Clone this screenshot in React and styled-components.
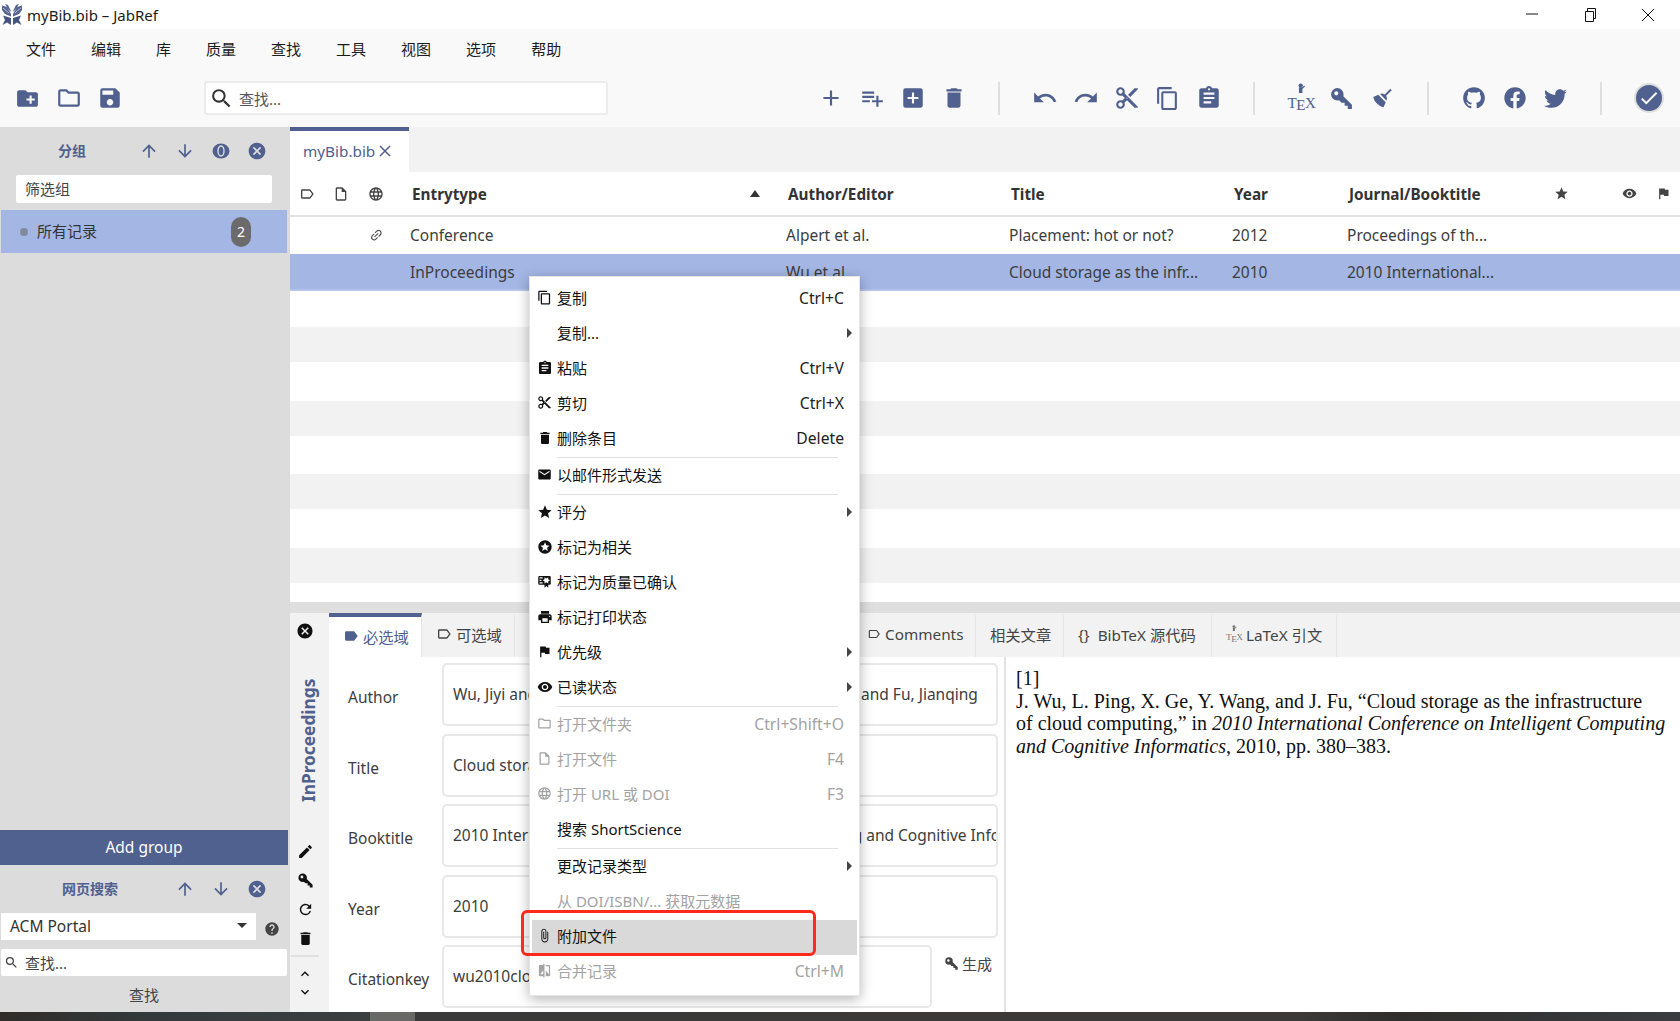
import styled, { createGlobalStyle } from "styled-components";
import {
  MdAdd, MdAddBox, MdArrowDownward, MdArrowUpward, MdAssignment, MdAttachFile, MdCancel, MdCheck,
  MdContentCopy, MdContentCut, MdCreateNewFolder, MdDelete, MdEdit, MdEmail, MdFlag, MdHelp,
  MdKeyboardArrowDown, MdKeyboardArrowUp, MdLabel, MdLanguage, MdLink, MdOutlineFolder,
  MdOutlineInsertDriveFile, MdOutlineLabel, MdPlaylistAdd, MdPrint, MdRedo, MdRefresh, MdSave,
  MdSearch, MdStar, MdStars, MdUndo, MdVisibility,
} from "react-icons/md";
import { FaFacebook, FaTwitter } from "react-icons/fa";

const BRAND = "#50608f";
const SELECTED = "#a3b6e4";
const UI_FONT = '"Noto Sans", "Noto Sans CJK SC", sans-serif';

const GITHUB = "M12,2A10,10 0 0,0 2,12C2,16.42 4.87,20.17 8.84,21.5C9.34,21.58 9.5,21.27 9.5,21C9.5,20.77 9.5,20.14 9.5,19.31C6.73,19.91 6.14,17.97 6.14,17.97C5.68,16.81 5.03,16.5 5.03,16.5C4.12,15.88 5.1,15.9 5.1,15.9C6.1,15.97 6.63,16.93 6.63,16.93C7.5,18.45 8.97,18 9.54,17.76C9.63,17.11 9.89,16.67 10.17,16.42C7.95,16.17 5.62,15.31 5.62,11.5C5.62,10.39 6,9.5 6.65,8.79C6.55,8.54 6.2,7.5 6.75,6.15C6.75,6.15 7.59,5.88 9.5,7.17C10.29,6.95 11.15,6.84 12,6.84C12.85,6.84 13.71,6.95 14.5,7.17C16.41,5.88 17.25,6.15 17.25,6.15C17.8,7.5 17.45,8.54 17.35,8.79C18,9.5 18.38,10.39 18.38,11.5C18.38,15.32 16.04,16.16 13.81,16.41C14.17,16.72 14.5,17.33 14.5,18.26C14.5,19.6 14.5,20.68 14.5,21C14.5,21.27 14.66,21.59 15.17,21.5C19.14,20.16 22,16.42 22,12A10,10 0 0,0 12,2Z";
const KEY = "M22,18V22H18V19H15V16H12L9.74,13.74C9.19,13.91 8.61,14 8,14A6,6 0 0,1 2,8A6,6 0 0,1 8,2A6,6 0 0,1 14,8C14,8.61 13.91,9.19 13.74,9.74L22,18M7,5A2,2 0 0,0 5,7A2,2 0 0,0 7,9A2,2 0 0,0 9,7A2,2 0 0,0 7,5Z";
const BROOM = "M19.36,2.72L20.78,4.14L15.06,9.85C16.13,11.39 16.28,13.24 15.38,14.44L9.06,8.12C10.26,7.22 12.11,7.37 13.65,8.44L19.36,2.72M5.93,17.57C3.92,15.56 2.69,13.16 2.35,10.92L7.23,8.83L14.67,16.27L12.58,21.15C10.34,20.81 7.94,19.58 5.93,17.57Z";
const CERTIFICATE = "M4,3C2.89,3 2,3.89 2,5V15A2,2 0 0,0 4,17H12V22L15,19L18,22V17H20A2,2 0 0,0 22,15V8L22,6V5A2,2 0 0,0 20,3H16V3H4M12,5L15,7L18,5V8.5L21,10L18,11.5V15L15,13L12,15V11.5L9,10L12,8.5V5M4,5H9V7H4V5M4,9H7V11H4V9M4,13H9V15H4V13Z";
const COMPARE = "M19,3H14V5H19V18L14,12V21H19A2,2 0 0,0 21,19V5C21,3.89 20.1,3 19,3M10,18H5L10,12M10,3H5C3.89,3 3,3.89 3,5V19A2,2 0 0,0 5,21H10V23H12V1H10V3Z";

const GlobalStyle = createGlobalStyle`
  html, body {
    margin: 0;
    padding: 0;
    background: #fff;
    overflow: hidden;
  }
  * {
    box-sizing: border-box;
  }
`;

const Page = styled.div`
  position: relative;
  width: 1680px;
  height: 1021px;
  display: flex;
  flex-direction: column;
  overflow: hidden;
  font-family: ${UI_FONT};
  font-size: 15px;
  color: #333;
`;

const TitleBar = styled.div`
  height: 29px;
  flex: none;
  display: flex;
  align-items: center;
  padding-left: 2px;
  background: #fff;
  color: #1c1c1c;
`;

const TitleText = styled.span`
  margin-left: 5px;
  font-size: 15px;
  flex: 1;
`;

const WindowButton = styled.div`
  width: 58px;
  display: flex;
  justify-content: center;
`;

const WindowButtons = styled.div`
  display: flex;
  padding-right: 3px;
`;

const MenuBar = styled.div`
  height: 40px;
  flex: none;
  display: flex;
  align-items: center;
  padding-left: 8px;
  background: #f9f9f9;
  color: #1c1c1c;
`;

const MenuItem = styled.span`
  padding: 0 18px;
  margin-right: -1px;
  line-height: 40px;
`;

const ToolBar = styled.div`
  height: 58px;
  flex: none;
  display: flex;
  align-items: center;
  padding-left: 7px;
  background: #f9f9f9;
`;

const ToolButton = styled.div`
  width: 41px;
  height: 36px;
  flex: none;
  display: flex;
  align-items: center;
  justify-content: center;
  color: ${BRAND};
`;

const ToolSeparator = styled.div`
  width: 2px;
  height: 33px;
  flex: none;
  background: #dfdfdf;
  margin: 0 ${(p) => p.$after}px 0 24px;
`;

const SearchBox = styled.div`
  width: 404px;
  height: 34px;
  margin: 0 202px 0 74px;
  flex: none;
  display: flex;
  align-items: center;
  gap: 5px;
  padding-left: 3px;
  background: #fff;
  border: 2px solid #ececec;
  border-radius: 3px;
  color: #555;
`;

const CheckBadge = styled.div`
  width: 26px;
  height: 26px;
  border-radius: 50%;
  background: ${BRAND};
  box-shadow: 0 0 0 2px #dedede;
  color: #fff;
  display: flex;
  align-items: center;
  justify-content: center;
`;

const Body = styled.div`
  flex: 1;
  min-height: 0;
  display: flex;
`;

const SidePanel = styled.div`
  width: 290px;
  flex: none;
  display: flex;
  flex-direction: column;
  background: #dcdcdc;
`;

const PanelHeader = styled.div`
  height: 48px;
  flex: none;
  display: flex;
  align-items: center;
`;

const PanelTitle = styled.div`
  width: ${(p) => p.$width}px;
  padding: 0 0 3px 13px;
  flex: none;
  text-align: center;
  font-weight: 700;
  color: ${BRAND};
  font-size: 14px;
`;

const PanelIcon = styled.div`
  width: 36px;
  flex: none;
  display: flex;
  justify-content: center;
  color: ${BRAND};
`;

const FilterInput = styled.div`
  width: 256px;
  height: 28px;
  margin-left: 16px;
  padding-left: 9px;
  flex: none;
  background: #fff;
  border-radius: 2px;
  line-height: 28px;
  color: #444;
`;

const GroupRow = styled.div`
  width: 286px;
  height: 43px;
  margin: 7px 0 0 1px;
  flex: none;
  display: flex;
  align-items: center;
  background: ${SELECTED};
`;

const GroupDot = styled.span`
  width: 8px;
  height: 8px;
  margin: 0 9px 0 19px;
  border-radius: 50%;
  background: #7f8a9f;
`;

const GroupName = styled.span`
  flex: 1;
  margin-top: -2px;
  color: #333;
`;

const CountBadge = styled.span`
  width: 20px;
  height: 30px;
  margin-right: 36px;
  border-radius: 10px;
  background: #6b6b6b;
  color: #fff;
  font-size: 14px;
  display: flex;
  align-items: center;
  justify-content: center;
`;

const PanelSpacer = styled.div`
  flex: 1;
`;

const AddGroupButton = styled.div`
  width: 288px;
  height: 35px;
  flex: none;
  background: ${BRAND};
  color: #fff;
  text-align: center;
  line-height: 34px;
  font-size: 15.5px;
`;

const ComboRow = styled.div`
  height: 27px;
  flex: none;
  display: flex;
  align-items: center;
  padding-left: 1px;
`;

const ComboBox = styled.div`
  width: 255px;
  height: 27px;
  flex: none;
  display: flex;
  align-items: center;
  justify-content: space-between;
  padding: 0 9px 2px;
  background: #fff;
  font-size: 15.5px;
`;

const ComboArrow = styled.span`
  width: 0;
  height: 0;
  border-left: 5px solid transparent;
  border-right: 5px solid transparent;
  border-top: 5px solid #333;
`;

const HelpIcon = styled.span`
  margin: 4px 0 0 8px;
  display: flex;
  color: #444;
`;

const WebSearchInput = styled.div`
  width: 286px;
  height: 27px;
  margin: 9px 0 0 1px;
  flex: none;
  display: flex;
  align-items: center;
  gap: 6px;
  padding: 0 0 1px 3px;
  background: #fff;
  border-radius: 2px;
  color: #444;
`;

const FetchButton = styled.div`
  width: 62px;
  height: 32px;
  margin: 4px 0 0 113px;
  flex: none;
  text-align: center;
  line-height: 31px;
  color: #444;
`;

const Main = styled.div`
  flex: 1;
  min-width: 0;
  display: flex;
  flex-direction: column;
`;

const FileTabs = styled.div`
  height: 45px;
  flex: none;
  background: #f2f2f2;
`;

const FileTab = styled.div`
  width: 119px;
  height: 45px;
  display: flex;
  align-items: center;
  gap: 4px;
  padding: 0 0 2px 13px;
  background: #fff;
  border-top: 4px solid ${BRAND};
  color: ${BRAND};
  font-size: 15.3px;
`;

const TableArea = styled.div`
  height: 430px;
  flex: none;
  overflow: hidden;
  font-size: 15.5px;
`;

const columns = "34px 34px 36px 392px 223px 223px 115px 194px 40px 31px 34px 34px";

const HeaderRow = styled.div`
  height: 45px;
  display: grid;
  grid-template-columns: ${columns};
  align-items: center;
  border-bottom: 2px solid #e3e3e3;
  font-weight: 700;
  font-size: 15.3px;
  color: #333;
`;

const HeaderIcon = styled.div`
  display: flex;
  justify-content: center;
  color: #444;
`;

const HeaderText = styled.div`
  padding: ${(p) => (p.$first ? "0 26px 0 18px" : "0 0 0 2px")};
  display: flex;
  align-items: center;
  justify-content: space-between;
`;

const SortArrow = styled.span`
  width: 0;
  height: 0;
  border-left: 5px solid transparent;
  border-right: 5px solid transparent;
  border-bottom: 7px solid #333;
`;

const Row = styled.div`
  height: 36.75px;
  padding-top: 2px;
  display: grid;
  grid-template-columns: ${columns};
  align-items: center;
  background: ${(p) => p.$background};
  border-bottom: 2px solid ${(p) => (p.$selected ? "#b5c5ea" : "#fff")};
  color: #3d3d3d;
`;

const Cell = styled.div`
  white-space: nowrap;
  overflow: hidden;
  padding-left: ${(p) => (p.$first ? "16px" : "0")};
`;

const LinkCell = styled.div`
  display: flex;
  justify-content: center;
  color: #555;
  transform: rotate(-45deg);
`;

const ScrollTrack = styled.div`
  height: 11px;
  flex: none;
  background: #dfdfdf;
`;

const BottomPane = styled.div`
  flex: 1;
  min-height: 0;
  display: flex;
`;

const EditorStrip = styled.div`
  width: 39px;
  flex: none;
  display: flex;
  flex-direction: column;
  align-items: center;
  padding: 9px 9px 0 0;
  background: #f2f2f2;
  color: #111;
`;

const EntryTypeLabel = styled.div`
  height: 122px;
  margin: 40px 0 41px 8px;
  writing-mode: vertical-rl;
  transform: rotate(180deg);
  font-weight: 700;
  font-size: 17.3px;
  line-height: 22px;
  white-space: nowrap;
  color: ${BRAND};
`;

const StripStack = styled.div`
  display: flex;
  flex-direction: column;
  align-items: center;
  gap: 12px;
`;

const StripSeparator = styled.div`
  width: 28px;
  height: 2px;
  margin: 8px 0 9px;
  background: #dfdfdf;
`;

const Chevrons = styled.div`
  display: flex;
  flex-direction: column;
  align-items: center;
  gap: 2px;
`;

const Editor = styled.div`
  flex: 1;
  min-width: 0;
  display: flex;
  flex-direction: column;
`;

const EditorTabs = styled.div`
  height: 44px;
  flex: none;
  display: flex;
  background: #f2f2f2;
  font-size: 15.3px;
`;

const EditorTab = styled.div`
  width: ${(p) => p.$width}px;
  flex: none;
  display: flex;
  align-items: center;
  gap: ${(p) => p.$gap ?? 4}px;
  padding: 0 0 ${(p) => (p.$active ? 2 : 6)}px ${(p) => p.$pad}px;
  white-space: nowrap;
  background: ${(p) => (p.$active ? "#fff" : "#f2f2f2")};
  border-top: 4px solid ${(p) => (p.$active ? BRAND : "#f2f2f2")};
  border-right: 1px solid #e4e4e4;
  color: ${(p) => (p.$active ? BRAND : "#444")};
`;

const EditorContent = styled.div`
  flex: 1;
  min-height: 0;
  display: flex;
`;

const FieldsPanel = styled.div`
  width: 677px;
  flex: none;
  display: flex;
  flex-direction: column;
  gap: 7.5px;
  padding: 6px 6px 0 19px;
  border-right: 2px solid #e2e2e2;
  font-size: 15.5px;
`;

const FieldRow = styled.div`
  height: 63px;
  flex: none;
  display: flex;
  align-items: center;
`;

const FieldLabel = styled.div`
  width: 94px;
  flex: none;
  padding-top: 5px;
  color: #3d3d3d;
`;

const FieldValue = styled.div`
  flex: 1;
  min-width: 0;
  height: 63px;
  padding: 0 7px 0 9px;
  line-height: 59px;
  white-space: nowrap;
  overflow: hidden;
  background: #fff;
  border: 2px solid #e8e8e8;
  border-radius: 5px;
  color: #3d3d3d;
`;

const GenerateButton = styled.div`
  width: 66px;
  flex: none;
  display: flex;
  align-items: center;
  justify-content: flex-end;
  gap: 3px;
  padding: 0 6px 27px 0;
  font-size: 15px;
  color: #444;
`;

const Preview = styled.div`
  flex: 1;
  padding: 10px 0 0 10px;
  font-family: "Liberation Serif", serif;
  font-size: 20px;
  line-height: 22.7px;
  white-space: nowrap;
  color: #111;
`;

const DesktopStrip = styled.div`
  height: 9px;
  flex: none;
  background: linear-gradient(
    90deg,
    #2f2c29 0,
    #343a3c 160px,
    #3c3f40 370px,
    #686866 370px,
    #686866 415px,
    #3a3a3a 415px,
    #3c3a38 1300px,
    #2f2e2c 1400px,
    #3a3c40 1670px
  );
`;

const ContextMenu = styled.div`
  position: absolute;
  left: 529px;
  top: 276px;
  width: 331px;
  padding: 5px 2px;
  background: #fff;
  border: 1px solid #e6e6e6;
  box-shadow: 0 3px 12px rgba(0, 0, 0, 0.3);
`;

const MenuRow = styled.div`
  height: 35px;
  padding-bottom: 4px;
  display: grid;
  grid-template-columns: 25px 1fr auto 13px;
  align-items: center;
  background: ${(p) => (p.$active ? "#d9d9d9" : "transparent")};
  color: ${(p) => (p.$disabled ? "#a3a3a3" : "#111")};
`;

const MenuIcon = styled.span`
  display: flex;
  justify-content: center;
`;

const Shortcut = styled.span`
  font-size: 15.7px;
  color: ${(p) => (p.$disabled ? "#a3a3a3" : "#222")};
`;

const SubArrow = styled.span`
  width: 0;
  height: 0;
  margin-left: 3px;
  border-top: 5px solid transparent;
  border-bottom: 5px solid transparent;
  border-left: 5px solid #444;
`;

const MenuSeparator = styled.div`
  height: 2px;
  margin: 0 19px 0 25px;
  border-top: 1px solid #e2e2e2;
`;

const Annotation = styled.div`
  position: absolute;
  left: 521px;
  top: 910px;
  width: 295px;
  height: 46px;
  border: 3.5px solid #ff2a1a;
  border-radius: 6px;
`;

const MdiIcon = ({ d, size = 24 }) => (
  <svg viewBox="0 0 24 24" width={size} height={size} fill="currentColor">
    <path d={d} />
  </svg>
);

const Logo = () => (
  <svg width="20" height="21" viewBox="0 0 20 21">
    <path fill="#55648f" d="M0 1.5L5 3l4 7v2.5L3 10 0 6zM20 1.5L15 3l-4 7v2.5L17 10l3-4zM3 0l3 1 3.5 7L7 6zM17 0l-3 1-3.5 7L13 6z" />
    <path fill="#46557f" d="M1 11.5l8 2.5v7l-4-2.5L0.500 21 3 16zM19 11.5l-8 2.500v7l4-2.500 4.500 2.500L17 16z" />
    <path stroke="#fff" strokeWidth="0.6" fill="none" d="M1 4l6 5M18.800 4l-6 5" />
  </svg>
);

const TexIcon = styled.div`
  position: relative;
  width: ${(p) => p.$size}px;
  height: ${(p) => p.$size}px;
  color: ${(p) => p.$color};
`;

const TexMark = styled.span`
  position: absolute;
  left: 0;
  bottom: 0;
  font-family: "Liberation Serif", serif;
  font-size: ${(p) => p.$size * 0.58}px;
  line-height: 1;
  letter-spacing: -0.5px;
  white-space: nowrap;
`;

const TexE = styled.span`
  position: relative;
  top: 2px;
`;

const TexFigure = styled.svg`
  position: absolute;
  left: 32%;
  top: -8%;
  width: 36%;
  height: 40%;
`;

const LaTeXGlyph = ({ size, color }) => (
  <TexIcon $size={size} $color={color}>
    <TexFigure viewBox="0 0 10 12" fill="currentColor">
      <circle cx="5" cy="3" r="2.500" />
      <path d="M3 5h4l2-2 1 1-3 3v5H3z" />
    </TexFigure>
    <TexMark $size={size}>T<TexE>E</TexE>X</TexMark>
  </TexIcon>
);

const GroupIntersectionIcon = () => (
  <svg width="18" height="16" viewBox="0 0 18 16">
    <ellipse cx="9" cy="8" rx="8.500" ry="7.500" fill={BRAND} />
    <ellipse cx="9" cy="8" rx="3" ry="5" fill="none" stroke="#dcdcdc" strokeWidth="1.400" />
  </svg>
);

const menuItems = [
  { icon: <MdContentCopy size={15} />, label: "复制", shortcut: "Ctrl+C" },
  { label: "复制...", sub: true },
  { icon: <MdAssignment size={16} />, label: "粘贴", shortcut: "Ctrl+V" },
  { icon: <MdContentCut size={15} />, label: "剪切", shortcut: "Ctrl+X" },
  { icon: <MdDelete size={16} />, label: "删除条目", shortcut: "Delete" },
  { separator: true },
  { icon: <MdEmail size={15} />, label: "以邮件形式发送" },
  { separator: true },
  { icon: <MdStar size={16} />, label: "评分", sub: true },
  { icon: <MdStars size={16} />, label: "标记为相关" },
  { icon: <MdiIcon d={CERTIFICATE} size={15} />, label: "标记为质量已确认" },
  { icon: <MdPrint size={16} />, label: "标记打印状态" },
  { icon: <MdFlag size={15} />, label: "优先级", sub: true },
  { icon: <MdVisibility size={16} />, label: "已读状态", sub: true },
  { separator: true },
  { icon: <MdOutlineFolder size={15} />, label: "打开文件夹", shortcut: "Ctrl+Shift+O", disabled: true },
  { icon: <MdOutlineInsertDriveFile size={15} />, label: "打开文件", shortcut: "F4", disabled: true },
  { icon: <MdLanguage size={15} />, label: "打开 URL 或 DOI", shortcut: "F3", disabled: true },
  { label: "搜索 ShortScience" },
  { separator: true },
  { label: "更改记录类型", sub: true },
  { label: "从 DOI/ISBN/... 获取元数据", disabled: true },
  { icon: <MdAttachFile size={15} />, label: "附加文件", active: true },
  { icon: <MdiIcon d={COMPARE} size={15} />, label: "合并记录", shortcut: "Ctrl+M", disabled: true },
];

const menus = ["文件", "编辑", "库", "质量", "查找", "工具", "视图", "选项", "帮助"];

const fields = [
  { label: "Author", value: "Wu, Jiyi and Ping, Lingdi and Ge, Xiaoping and Wang, Ya and Fu, Jianqing" },
  { label: "Title", value: "Cloud storage as the infrastructure of cloud computing" },
  { label: "Booktitle", value: "2010 International Conference on Intelligent Computing and Cognitive Informatics" },
  { label: "Year", value: "2010" },
];

const emptyRows = [0, 1, 2, 3, 4, 5, 6, 7, 8];

const PanelButtons = () => (
  <>
    <PanelIcon><MdArrowUpward size={20} /></PanelIcon>
    <PanelIcon><MdArrowDownward size={20} /></PanelIcon>
  </>
);

export default function App() {
  return (
    <Page>
      <GlobalStyle />
      <TitleBar>
        <Logo />
        <TitleText>myBib.bib – JabRef</TitleText>
        <WindowButtons>
          <WindowButton>
            <svg width="12" height="12" viewBox="0 0 12 12" stroke="#111" fill="none"><path d="M0 6h12" /></svg>
          </WindowButton>
          <WindowButton>
            <svg width="12" height="14" viewBox="0 0 12 14" stroke="#111" fill="none"><path d="M1.500 3.500h8v10h-8zM3.500 3.500v-3h8v10h-2" /></svg>
          </WindowButton>
          <WindowButton>
            <svg width="14" height="14" viewBox="0 0 14 14" stroke="#111" fill="none"><path d="M1 1l12 12M13 1L1 13" /></svg>
          </WindowButton>
        </WindowButtons>
      </TitleBar>
      <MenuBar>
        {menus.map((m) => <MenuItem key={m}>{m}</MenuItem>)}
      </MenuBar>
      <ToolBar>
        <ToolButton><MdCreateNewFolder size={25} /></ToolButton>
        <ToolButton><MdOutlineFolder size={26} /></ToolButton>
        <ToolButton><MdSave size={26} /></ToolButton>
        <SearchBox>
          <MdSearch size={25} color="#333" />
          <span>查找...</span>
        </SearchBox>
        <ToolButton><MdAdd size={26} /></ToolButton>
        <ToolButton><MdPlaylistAdd size={26} /></ToolButton>
        <ToolButton><MdAddBox size={26} /></ToolButton>
        <ToolButton><MdDelete size={26} /></ToolButton>
        <ToolSeparator $after={24} />
        <ToolButton><MdUndo size={26} /></ToolButton>
        <ToolButton><MdRedo size={26} /></ToolButton>
        <ToolButton><MdContentCut size={26} /></ToolButton>
        <ToolButton><MdContentCopy size={25} /></ToolButton>
        <ToolButton><MdAssignment size={26} /></ToolButton>
        <ToolSeparator $after={25} />
        <ToolButton><LaTeXGlyph size={26} color={BRAND} /></ToolButton>
        <ToolButton><MdiIcon d={KEY} size={25} /></ToolButton>
        <ToolButton><MdiIcon d={BROOM} size={24} /></ToolButton>
        <ToolSeparator $after={24} />
        <ToolButton><MdiIcon d={GITHUB} size={26} /></ToolButton>
        <ToolButton><FaFacebook size={22} /></ToolButton>
        <ToolButton><FaTwitter size={23} /></ToolButton>
        <ToolSeparator $after={26} />
        <ToolButton><CheckBadge><MdCheck size={22} /></CheckBadge></ToolButton>
      </ToolBar>
      <Body>
        <SidePanel>
          <PanelHeader>
            <PanelTitle $width={131}>分组</PanelTitle>
            <PanelButtons />
            <PanelIcon><GroupIntersectionIcon /></PanelIcon>
            <PanelIcon><MdCancel size={20} /></PanelIcon>
          </PanelHeader>
          <FilterInput>筛选组</FilterInput>
          <GroupRow>
            <GroupDot />
            <GroupName>所有记录</GroupName>
            <CountBadge>2</CountBadge>
          </GroupRow>
          <PanelSpacer />
          <AddGroupButton>Add group</AddGroupButton>
          <PanelHeader>
            <PanelTitle $width={167}>网页搜索</PanelTitle>
            <PanelButtons />
            <PanelIcon><MdCancel size={20} /></PanelIcon>
          </PanelHeader>
          <ComboRow>
            <ComboBox>
              <span>ACM Portal</span>
              <ComboArrow />
            </ComboBox>
            <HelpIcon><MdHelp size={16} /></HelpIcon>
          </ComboRow>
          <WebSearchInput>
            <MdSearch size={15} />
            <span>查找...</span>
          </WebSearchInput>
          <FetchButton>查找</FetchButton>
        </SidePanel>
        <Main>
          <FileTabs>
            <FileTab>
              <span>myBib.bib</span>
              <svg width="12" height="12" viewBox="0 0 12 12" stroke={BRAND} strokeWidth="1.500" fill="none"><path d="M1 1l10 10M11 1L1 11" /></svg>
            </FileTab>
          </FileTabs>
          <TableArea>
            <HeaderRow>
              <HeaderIcon><MdOutlineLabel size={16} /></HeaderIcon>
              <HeaderIcon><MdOutlineInsertDriveFile size={16} /></HeaderIcon>
              <HeaderIcon><MdLanguage size={16} /></HeaderIcon>
              <HeaderText $first>Entrytype<SortArrow /></HeaderText>
              <HeaderText>Author/Editor</HeaderText>
              <HeaderText>Title</HeaderText>
              <HeaderText>Year</HeaderText>
              <HeaderText>Journal/Booktitle</HeaderText>
              <HeaderIcon><MdStar size={15} /></HeaderIcon>
              <span />
              <HeaderIcon><MdVisibility size={15} /></HeaderIcon>
              <HeaderIcon><MdFlag size={15} /></HeaderIcon>
            </HeaderRow>
            <Row $background="#fff">
              <span />
              <span />
              <LinkCell><MdLink size={15} /></LinkCell>
              <Cell $first>Conference</Cell>
              <Cell>Alpert et al.</Cell>
              <Cell>Placement: hot or not?</Cell>
              <Cell>2012</Cell>
              <Cell>Proceedings of th...</Cell>
            </Row>
            <Row $background={SELECTED} $selected>
              <span />
              <span />
              <span />
              <Cell $first>InProceedings</Cell>
              <Cell>Wu et al.</Cell>
              <Cell>Cloud storage as the infr...</Cell>
              <Cell>2010</Cell>
              <Cell>2010 International...</Cell>
            </Row>
            {emptyRows.map((n) => (
              <Row key={n} $background={n % 2 === 1 ? "#f2f2f2" : "#fff"} />
            ))}
          </TableArea>
          <ScrollTrack />
          <BottomPane>
            <EditorStrip>
              <MdCancel size={18} />
              <EntryTypeLabel>InProceedings</EntryTypeLabel>
              <StripStack>
                <MdEdit size={17} />
                <MdiIcon d={KEY} size={17} />
                <MdRefresh size={17} />
                <MdDelete size={17} />
              </StripStack>
              <StripSeparator />
              <Chevrons>
                <MdKeyboardArrowUp size={16} />
                <MdKeyboardArrowDown size={16} />
              </Chevrons>
            </EditorStrip>
            <Editor>
              <EditorTabs>
                <EditorTab $active $width={93} $pad={14}><MdLabel size={16} />必选域</EditorTab>
                <EditorTab $width={93} $pad={14}><MdOutlineLabel size={16} />可选域</EditorTab>
                <EditorTab $width={343} $pad={14} />
                <EditorTab $width={118} $pad={9}><MdOutlineLabel size={14} />Comments</EditorTab>
                <EditorTab $width={88} $pad={14}>相关文章</EditorTab>
                <EditorTab $width={148} $pad={14} $gap={8}><span>{"{}"}</span><span>BibTeX 源代码</span></EditorTab>
                <EditorTab $width={125} $pad={14}><LaTeXGlyph size={16} color="#777" />LaTeX 引文</EditorTab>
              </EditorTabs>
              <EditorContent>
                <FieldsPanel>
                  {fields.map((f) => (
                    <FieldRow key={f.label}>
                      <FieldLabel>{f.label}</FieldLabel>
                      <FieldValue>{f.value}</FieldValue>
                    </FieldRow>
                  ))}
                  <FieldRow>
                    <FieldLabel>Citationkey</FieldLabel>
                    <FieldValue>wu2010cloud</FieldValue>
                    <GenerateButton><MdiIcon d={KEY} size={15} />生成</GenerateButton>
                  </FieldRow>
                </FieldsPanel>
                <Preview>
                  [1]<br />
                  J. Wu, L. Ping, X. Ge, Y. Wang, and J. Fu, “Cloud storage as the infrastructure<br />
                  of cloud computing,” in <i>2010 International Conference on Intelligent Computing</i><br />
                  <i>and Cognitive Informatics</i>, 2010, pp. 380–383.
                </Preview>
              </EditorContent>
            </Editor>
          </BottomPane>
        </Main>
      </Body>
      <DesktopStrip />
      <ContextMenu>
        {menuItems.map((item, i) =>
          item.separator ? (
            <MenuSeparator key={i} />
          ) : (
            <MenuRow key={i} $disabled={item.disabled} $active={item.active}>
              <MenuIcon>{item.icon}</MenuIcon>
              <span>{item.label}</span>
              <Shortcut $disabled={item.disabled}>{item.shortcut}</Shortcut>
              {item.sub ? <SubArrow /> : <span />}
            </MenuRow>
          )
        )}
      </ContextMenu>
      <Annotation />
    </Page>
  );
}
